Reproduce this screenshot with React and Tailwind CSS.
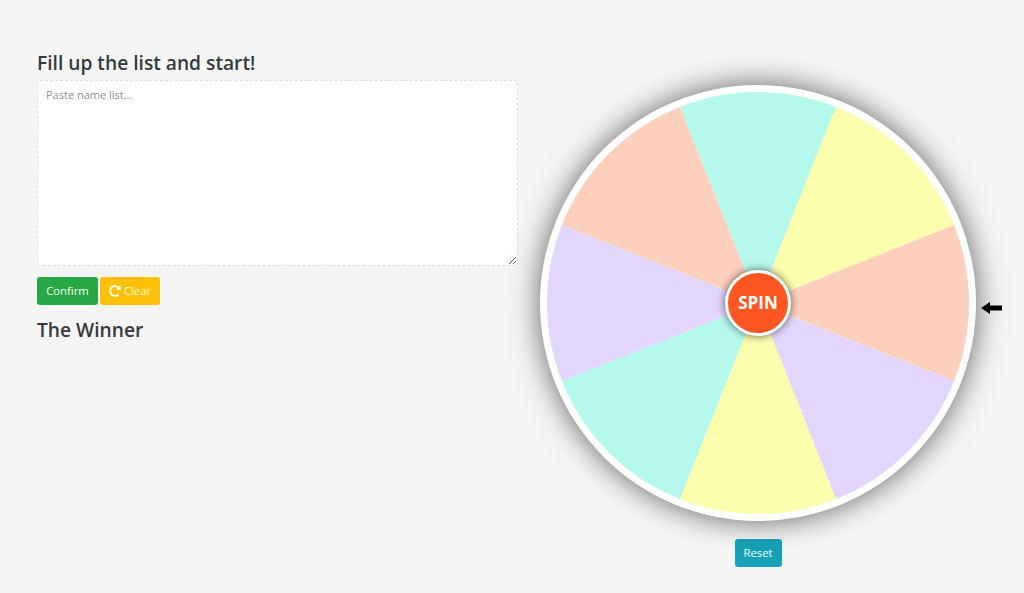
import React from "react";
import { FaRedoAlt } from "react-icons/fa";

const colors = ["#b5f9ec", "#fdfdae", "#fdcfbd", "#e2d6fc", "#fdfdae", "#b5f9ec", "#e2d6fc", "#fdcfbd"];

function Wheel() {
  const r = 211;
  const c = 211;
  const pt = (deg) => {
    const a = ((deg - 90) * Math.PI) / 180;
    return `${c + r * Math.cos(a)} ${c + r * Math.sin(a)}`;
  };
  return (
    <svg viewBox="0 0 422 422" className="block w-full h-full">
      {colors.map((col, i) => {
        const axial = i % 2 === 0;
        const mid = i * 45;
        const half = axial ? 21.7 : 23.3;
        return <path key={i} fill={col} d={`M${c} ${c} L${pt(mid - half)} A${r} ${r} 0 0 1 ${pt(mid + half)} Z`} />;
      })}
    </svg>
  );
}

export default function App() {
  return (
    <div className="w-[1024px] h-[593px] overflow-hidden bg-[#f5f5f5] flex text-[#343a40] font-['Open_Sans','Noto_Sans',sans-serif]">
      <div className="w-[481px] ml-[37px] pt-[51px] shrink-0">
        <h2 className="text-[19.2px] leading-[24px] font-semibold m-0 mb-[5px]">Fill up the list and start!</h2>
        <textarea
          placeholder="Paste name list..."
          className="block w-[481px] h-[186px] bg-white border border-dashed border-[#dcdcdc] rounded-[3px] px-[8px] py-[6px] text-[11px] leading-[16px] outline-none placeholder:text-[#919191]"
        />
        <div className="flex gap-[2px] mt-[11px]">
          <button className="w-[61px] h-[28px] bg-[#28a745] text-[#f4fff6] text-[11.3px] rounded-[3px]">Confirm</button>
          <button className="w-[60px] h-[28px] bg-[#ffc107] text-[#fff6d8] text-[11.3px] rounded-[3px] flex items-center justify-center gap-[3px]">
            <FaRedoAlt className="w-[12px] h-[12px] text-white" />
            Clear
          </button>
        </div>
        <h2 className="text-[19.2px] leading-[24px] font-semibold mt-[13px]">The Winner</h2>
      </div>
      <div className="flex flex-col items-center ml-[22px] pt-[85px] w-[436px] shrink-0">
        <div className="relative w-[436px] h-[436px] rounded-full bg-white p-[7px] shadow-[0_0_30px_rgba(0,0,0,0.6)]">
          <Wheel />
          <div className="absolute left-[185px] top-[185px] w-[66px] h-[66px] rounded-full bg-[#ff5722] border-[3px] border-white shadow-[0_0_8px_rgba(0,0,0,0.6)] flex items-center justify-center text-white text-[17px] font-bold">
            SPIN
          </div>
          <svg viewBox="0 0 21 12" className="absolute left-[441px] top-[217px] w-[21px] h-[12px] text-black">
            <path fill="currentColor" d="M0 6 L9 0 V3.6 H21 V8.6 H9 V12 Z" />
          </svg>
        </div>
        <button className="mt-[18px] w-[47px] h-[28px] bg-[#17a2b8] text-[#eefcff] text-[11.3px] rounded-[3px]">Reset</button>
      </div>
    </div>
  );
}
